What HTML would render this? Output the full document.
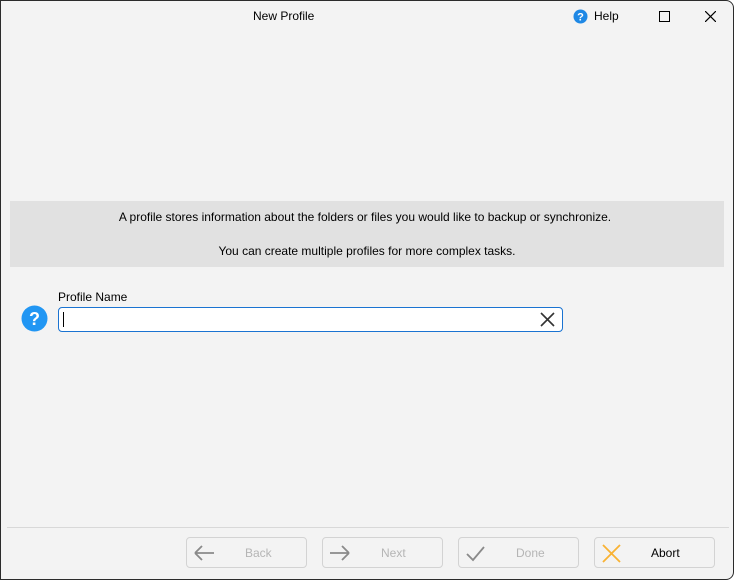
<!DOCTYPE html>
<html><head><style>
body{margin:0;width:734px;height:580px;overflow:hidden;background:#fff;font-family:"Liberation Sans",sans-serif;font-size:12px;color:#000}
.win{position:absolute;left:0;top:0;width:732px;height:578px;border:1px solid #2b2b2b;border-radius:0 8px 8px 0;background:#f3f3f3}
.t{position:absolute;white-space:nowrap}
.btn{position:absolute;top:536px;width:121px;height:31px;border:1px solid #d3d3d3;border-radius:4px;box-sizing:border-box;background:#f3f3f3}
.btn span{position:absolute;top:8px;color:#b5b5b5;font-size:12px}
.btn svg{position:absolute;left:5px;top:5px}
</style></head><body>
<div class="win">
<div class="t" style="left:252px;top:8px">New Profile</div>
<svg style="position:absolute;left:572px;top:8px" width="15" height="15"><circle cx="7.5" cy="7.5" r="7" fill="#1e88e5"/><text x="7.5" y="11.5" fill="#fff" font-size="11" font-weight="bold" text-anchor="middle" font-family="Liberation Sans">?</text></svg>
<div class="t" style="left:593px;top:8px">Help</div>
<div style="position:absolute;left:658px;top:10px;width:9px;height:9px;border:1px solid #000"></div>
<svg style="position:absolute;left:704px;top:10px" width="11" height="11"><path d="M0 0L11 11M11 0L0 11" stroke="#000" stroke-width="1.2"/></svg>
<div style="position:absolute;left:9px;top:200px;width:714px;height:66px;background:#e1e1e1"></div>
<div class="t" style="left:-2px;width:732px;text-align:center;top:209px">A profile stores information about the folders or files you would like to backup or synchronize.</div>
<div class="t" style="left:0;width:732px;text-align:center;top:243px">You can create multiple profiles for more complex tasks.</div>
<div class="t" style="left:57px;top:289px">Profile Name</div>
<svg style="position:absolute;left:20px;top:304px" width="27" height="27"><circle cx="13.5" cy="13.5" r="13" fill="#2196f3"/><text x="13.5" y="20" fill="#fff" font-size="18" font-weight="bold" text-anchor="middle" font-family="Liberation Sans">?</text></svg>
<div style="position:absolute;left:57px;top:306px;width:505px;height:25px;box-sizing:border-box;border:1px solid #1a73d1;border-radius:4px;background:#fff"></div>
<div style="position:absolute;left:62px;top:311px;width:1px;height:15px;background:#000"></div>
<svg style="position:absolute;left:539px;top:311px" width="15" height="15"><path d="M1 1L14 14M14 1L1 14" stroke="#333" stroke-width="1.6"/></svg>
<div style="position:absolute;left:6px;top:526px;width:722px;height:1px;background:#d8d8d8"></div>
<div class="btn" style="left:185px"><svg width="24" height="20"><path d="M3 10H22M3 10L10 3M3 10L10 17" stroke="#8a8a8a" stroke-width="1.8" fill="none"/></svg><span style="left:58px">Back</span></div>
<div class="btn" style="left:321px"><svg width="24" height="20"><path d="M2 10H21M21 10L14 3M21 10L14 17" stroke="#8a8a8a" stroke-width="1.8" fill="none"/></svg><span style="left:58px">Next</span></div>
<div class="btn" style="left:457px"><svg width="24" height="20"><path d="M3 11L9 17L20 4" stroke="#8a8a8a" stroke-width="1.8" fill="none"/></svg><span style="left:57px">Done</span></div>
<div class="btn" style="left:593px"><svg width="24" height="22"><path d="M3 2L20 19M20 2L3 19" stroke="#f9b233" stroke-width="1.8"/></svg><span style="left:56px;color:#000">Abort</span></div>
</div>
</body></html>
